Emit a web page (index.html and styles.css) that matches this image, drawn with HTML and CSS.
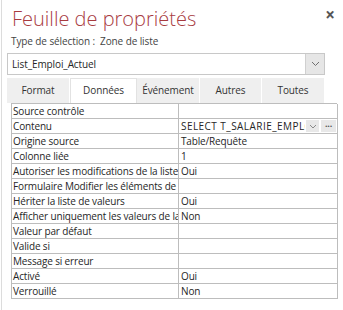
FILE: index.html
```html
<!DOCTYPE html>
<html lang="fr">
<head>
<meta charset="utf-8">
<title>Feuille de propriétés</title>
<link rel="stylesheet" href="styles.css">
</head>
<body>
<div class="panel">
  <div class="header">
    <h1 class="title">Feuille de propriétés</h1>
    <span class="close">×</span>
  </div>
  <div class="subtitle">Type de sélection :&nbsp; Zone de liste</div>
  <div class="combo">
    <span class="combo-text">List_Emploi_Actuel</span>
    <span class="combo-btn"><svg width="9" height="6" viewBox="0 0 9 6"><polyline points="1,1 4.5,4.5 8,1" fill="none" stroke="#707070" stroke-width="1"/></svg></span>
  </div>
  <div class="tabs">
    <div class="tab t1">Format</div>
    <div class="tab t2 active">Données</div>
    <div class="tab t3">Événement</div>
    <div class="tab t4">Autres</div>
    <div class="tab t5">Toutes</div>
  </div>
  <div class="grid">
    <div class="name">Source contrôle</div><div class="val"></div>
    <div class="name">Contenu</div><div class="val val-combo"><span class="vtext">SELECT T_SALARIE_EMPLOI.ID</span><span class="mini"><svg width="8" height="5" viewBox="0 0 8 5"><polyline points="1,1 4,4 7,1" fill="none" stroke="#8a8a8a" stroke-width="1"/></svg></span><span class="mini dots">···</span></div>
    <div class="name">Origine source</div><div class="val">Table/Requête</div>
    <div class="name">Colonne liée</div><div class="val">1</div>
    <div class="name">Autoriser les modifications de la liste</div><div class="val">Oui</div>
    <div class="name">Formulaire Modifier les éléments de la liste</div><div class="val"></div>
    <div class="name">Hériter la liste de valeurs</div><div class="val">Oui</div>
    <div class="name">Afficher uniquement les valeurs de la source</div><div class="val">Non</div>
    <div class="name">Valeur par défaut</div><div class="val"></div>
    <div class="name">Valide si</div><div class="val"></div>
    <div class="name">Message si erreur</div><div class="val"></div>
    <div class="name">Activé</div><div class="val">Oui</div>
    <div class="name">Verrouillé</div><div class="val">Non</div>
  </div>
</div>
</body>
</html>
```
FILE: styles.css
```css
html, body {
  margin: 0;
  padding: 0;
  background: #ffffff;
}
body {
  width: 343px;
  height: 310px;
  overflow: hidden;
  font-family: "Open Sans", "Noto Sans", sans-serif;
  color: #262626;
}
.panel {
  margin-left: 1px;
  border-left: 1px solid #dcdcdc;
  height: 310px;
  box-sizing: border-box;
  padding: 5px 0 0 5px;
}
.header {
  display: flex;
  justify-content: space-between;
  align-items: flex-start;
  height: 28px;
}
.title {
  margin: 0 0 0 5px;
  font-size: 20px;
  font-weight: 300;
  line-height: 28px;
  color: #a83b3f;
}
.close {
  font-size: 17px;
  font-weight: 700;
  color: #555555;
  line-height: 20px;
  margin-right: 8px;
}
.subtitle {
  margin-left: 4px;
  font-size: 10px;
  letter-spacing: -0.1px;
  line-height: 16px;
  color: #444444;
}
.combo {
  margin-top: 4px;
  width: 318px;
  height: 22px;
  box-sizing: border-box;
  border: 1px solid #c8c8c8;
  display: flex;
  align-items: stretch;
}
.combo-text {
  flex: 1;
  font-size: 10px;
  letter-spacing: -0.1px;
  line-height: 20px;
  padding-left: 4px;
  color: #262626;
}
.combo-btn {
  width: 18px;
  background: #e6e6e6;
  border-left: 1px solid #d0d0d0;
  display: flex;
  align-items: center;
  justify-content: center;
}
.tabs {
  margin-top: 3px;
  display: flex;
  width: 318px;
  height: 25px;
}
.tab {
  background: #efefef;
  font-size: 10px;
  letter-spacing: -0.1px;
  line-height: 25px;
  text-align: center;
  color: #333333;
  border-right: 1px solid #ffffff;
  box-sizing: border-box;
}
.tab.active {
  background: #ffffff;
  border: 1px solid #e2e2e2;
  border-bottom: none;
  line-height: 22px;
}
.t1 { width: 63px; }
.t2 { width: 67px; }
.t3 { width: 63px; }
.t4 { width: 62px; }
.t5 { width: 63px; }
.grid {
  margin-left: 4px;
  width: 326px;
  display: grid;
  grid-template-columns: 167px 159px;
  grid-auto-rows: 15px;
  border-top: 1px solid #bdbdbd;
  border-left: 1px solid #bdbdbd;
  box-sizing: border-box;
}
.name, .val {
  font-size: 10px;
  letter-spacing: -0.15px;
  line-height: 14px;
  border-right: 1px solid #bdbdbd;
  border-bottom: 1px solid #bdbdbd;
  white-space: nowrap;
  overflow: hidden;
  box-sizing: border-box;
  color: #262626;
}
.name {
  padding-left: 1px;
}
.val {
  padding-left: 2px;
}
.val-combo {
  display: flex;
  align-items: stretch;
  padding-right: 1px;
}
.vtext {
  flex: 1;
  overflow: hidden;
  white-space: nowrap;
  letter-spacing: 0.45px;
}
.mini {
  width: 13px;
  background: #e8e8e8;
  display: flex;
  align-items: center;
  justify-content: center;
  margin: 1px 0 1px 1px;
}
.mini.dots {
  width: 15px;
  margin-left: 2px;
  font-size: 9px;
  font-weight: 700;
  color: #555555;
  line-height: 12px;
}
```
